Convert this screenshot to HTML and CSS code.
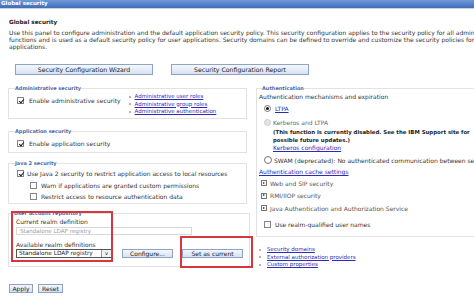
FILE: index.html
```html
<!DOCTYPE html>
<html lang="en">
<head>
  <meta charset="UTF-8">
  <title>Global security</title>
  <link rel="stylesheet" href="styles.css">
</head>
<body>
  <div class="titlebar">Global security</div>
  <div class="page">
    <h1>Global security</h1>
    <p class="desc">Use this panel to configure administration and the default application security policy. This security configuration applies to the security policy for all administrative<br>functions and is used as a default security policy for user applications. Security domains can be defined to override and customize the security policies for user<br>applications.</p>

    <div class="top-actions">
      <button class="btn wide">Security Configuration Wizard</button>
      <button class="btn wide">Security Configuration Report</button>
    </div>

    <div class="columns">
      <div class="left">
        <fieldset class="box admin">
          <legend>Administrative security</legend>
          <div class="admin-row">
            <label class="check"><span class="cb on"></span>Enable administrative security</label>
            <ul class="links">
              <li><a href="#">Administrative user roles</a></li>
              <li><a href="#">Administrative group roles</a></li>
              <li><a href="#">Administrative authentication</a></li>
            </ul>
          </div>
        </fieldset>

        <fieldset class="box app">
          <legend>Application security</legend>
          <label class="check"><span class="cb on"></span>Enable application security</label>
        </fieldset>

        <fieldset class="box java">
          <legend>Java 2 security</legend>
          <label class="check main"><span class="cb on"></span>Use Java 2 security to restrict application access to local resources</label>
          <label class="check sub"><span class="cb"></span>Warn if applications are granted custom permissions</label>
          <label class="check sub"><span class="cb"></span>Restrict access to resource authentication data</label>
        </fieldset>

        <fieldset class="box repo">
          <legend>User account repository</legend>
          <div class="field-label">Current realm definition</div>
          <div class="input disabled">Standalone LDAP registry</div>
          <div class="field-label second">Available realm definitions</div>
          <div class="repo-row">
            <div class="select">Standalone LDAP registry<span class="arrow">v</span></div>
            <button class="btn small">Configure...</button>
            <button class="btn current">Set as current</button>
          </div>
        </fieldset>

        <div class="mark mark-realm"></div>
        <div class="mark mark-current"></div>
      </div>

      <div class="right">
        <fieldset class="box auth">
          <legend>Authentication</legend>
          <div class="plain">Authentication mechanisms and expiration</div>
          <div class="radio-row ltpa"><span class="rb on"></span><a href="#">LTPA</a></div>
          <div class="radio-row off"><span class="rb dis"></span>Kerberos and LTPA</div>
          <div class="note">(This function is currently disabled. See the IBM Support site for<br>possible future updates.)</div>
          <a class="indent-link" href="#">Kerberos configuration</a>
          <div class="radio-row swam"><span class="rb"></span>SWAM (deprecated): No authenticated communication between servers</div>
          <a class="cache-link" href="#">Authentication cache settings</a>
          <div class="expand"><span class="ex"></span>Web and SIP security</div>
          <div class="expand"><span class="ex"></span>RMI/IIOP security</div>
          <div class="expand"><span class="ex"></span>Java Authentication and Authorization Service</div>
          <label class="check realm"><span class="cb"></span>Use realm-qualified user names</label>
        </fieldset>
        <ul class="links extra">
          <li><a href="#">Security domains</a></li>
          <li><a href="#">External authorization providers</a></li>
          <li><a href="#">Custom properties</a></li>
        </ul>
      </div>
    </div>

    <div class="bottom-actions">
      <button class="btn tiny">Apply</button>
      <button class="btn tiny">Reset</button>
    </div>
  </div>
</body>
</html>
```

FILE: styles.css
```css
* {
  margin: 0;
  padding: 0;
  box-sizing: border-box;
}
body {
  font-family: 'DejaVu Sans', Verdana, sans-serif;
  font-size: 6px;
  line-height: 7px;
  color: #333;
  background: #fff;
  overflow: hidden;
  width: 474px;
  height: 306px;
}
a {
  color: #2b2bb8;
  text-decoration: underline;
}
.titlebar {
  height: 9px;
  padding-left: 1px;
  background: linear-gradient(#7099d8, #3f6cb9);
  border-bottom: 1px solid #c3d2ea;
  color: #fff;
  font-weight: bold;
  font-size: 5.5px;
  line-height: 7px;
}
.page {
  width: 640px;
  padding: 0 9px;
}
h1 {
  margin-top: 10px;
  font-size: 5.7px;
  line-height: 7px;
  font-weight: bold;
  color: #222;
}
.desc {
  margin-top: 3px;
  white-space: nowrap;
}
.top-actions {
  display: flex;
  gap: 18px;
  margin-top: 14px;
  padding-left: 6px;
}
.btn {
  font-family: inherit;
  font-size: 6px;
  line-height: 7px;
  color: #222;
  background: linear-gradient(#f5f8fd, #d6e1f1);
  border: 1px solid #8fa3c4;
}
.btn.wide {
  width: 138px;
  height: 11px;
  font-size: 6.2px;
}
.columns {
  display: grid;
  grid-template-columns: 239px 380px;
  column-gap: 9px;
  margin-top: 10px;
  margin-left: -1px;
}
.left {
  display: flex;
  flex-direction: column;
  position: relative;
}
.box {
  border: 1px solid #e2e2e2;
  padding: 0 6px 0 8px;
}
legend {
  font-size: 5px;
  line-height: 6px;
  font-weight: bold;
  color: #4a6aa8;
  padding: 0;
  margin-left: -2px;
}
.check {
  display: flex;
  align-items: center;
  gap: 5px;
  height: 12px;
}
.cb {
  width: 7px;
  height: 7px;
  border: 1px solid #858585;
  background: #fff;
  flex: none;
  position: relative;
}
.cb.on::after {
  content: "";
  position: absolute;
  left: 1.5px;
  top: 0;
  width: 2px;
  height: 4px;
  border: solid #222;
  border-width: 0 1px 1px 0;
  transform: rotate(40deg);
}
.admin {
  height: 34px;
}
.admin-row {
  display: flex;
  gap: 8px;
  margin-top: 2px;
}
.admin-row .check {
  height: 10px;
  margin-top: 2px;
}
.links {
  list-style: none;
  font-size: 5.5px;
  line-height: 7.5px;
}
.links li {
  display: flex;
  align-items: center;
  gap: 4px;
}
.links li::before {
  content: "";
  width: 2px;
  height: 2px;
  background: #b5b5b5;
  flex: none;
}
.app {
  height: 25px;
  margin-top: 9px;
}
.app .check {
  margin-top: 3px;
}
.java {
  height: 44px;
  margin-top: 7px;
}
.java .check {
  height: 11.5px;
}
.java .check.main {
  margin-top: 2px;
  gap: 3px;
}
.java .check.sub {
  margin-left: 13px;
  gap: 4px;
}
.repo {
  height: 57px;
  margin-top: 6px;
  padding-left: 7px;
}
.field-label {
  line-height: 8px;
  margin-top: 2px;
}
.field-label.second {
  margin-top: 6px;
}
.input {
  width: 176px;
  height: 8px;
  margin-top: 1px;
  border: 1px solid #d8d8d8;
  line-height: 6px;
  padding-left: 3px;
  font-size: 5.6px;
}
.input.disabled {
  color: #9a9a9a;
}
.repo-row {
  display: flex;
  align-items: center;
}
.select {
  width: 96px;
  height: 9px;
  border: 1px solid #555;
  line-height: 7px;
  padding-left: 2px;
  position: relative;
  color: #222;
  font-size: 5.8px;
}
.select .arrow {
  position: absolute;
  right: 0;
  top: 0;
  width: 10px;
  height: 7px;
  border-left: 1px solid #999;
  background: #eef1f6;
  text-align: center;
  font-size: 5px;
  line-height: 7px;
}
.btn.small {
  width: 51px;
  height: 9px;
  margin-left: 10px;
}
.btn.current {
  width: 61px;
  height: 9px;
  margin-left: 9px;
}
.mark {
  position: absolute;
  border: 2px solid #d8363d;
  pointer-events: none;
}
.mark-realm {
  left: 3px;
  top: 126px;
  width: 102px;
  height: 51px;
}
.mark-current {
  left: 172px;
  top: 151px;
  width: 73px;
  height: 32px;
}
.auth {
  height: 152px;
  padding: 0 6px 0 2px;
}
.auth legend {
  margin-left: 3px;
}
.plain {
  line-height: 8px;
  margin-top: 2px;
}
.radio-row {
  display: flex;
  align-items: center;
  gap: 2px;
  height: 14px;
  margin-left: 5px;
}
.radio-row.ltpa {
  gap: 4px;
}
.radio-row.off {
  color: #666;
}
.rb {
  width: 7px;
  height: 7px;
  border-radius: 50%;
  border: 1px solid #777;
  background: #fff;
  flex: none;
  position: relative;
}
.rb.on::after {
  content: "";
  position: absolute;
  left: 1px;
  top: 1px;
  width: 3px;
  height: 3px;
  border-radius: 50%;
  background: #111;
}
.rb.dis {
  border-color: #ccc;
  background: #e4e4e4;
}
.note {
  margin-left: 14px;
  margin-top: -1px;
  font-weight: bold;
  font-size: 5.4px;
  line-height: 8px;
  color: #222;
  white-space: nowrap;
}
.indent-link {
  display: block;
  margin-left: 14px;
  line-height: 8px;
}
.radio-row.swam {
  height: 16px;
  white-space: nowrap;
}
.swam .rb {
  width: 8px;
  height: 8px;
}
.cache-link {
  display: block;
  line-height: 7px;
  margin-bottom: 2px;
}
.expand {
  display: flex;
  align-items: center;
  gap: 3px;
  height: 12.5px;
  margin-left: 2px;
  color: #555;
}
.ex {
  width: 6px;
  height: 6px;
  border: 1px solid #777;
  background: #f4f4f4;
  flex: none;
  position: relative;
}
.ex::after {
  content: "";
  position: absolute;
  left: 1px;
  top: 0.5px;
  border-left: 2.5px solid #333;
  border-top: 1.5px solid transparent;
  border-bottom: 1.5px solid transparent;
}
.check.realm {
  margin-left: 5px;
  height: 20px;
  gap: 4px;
}
.links.extra {
  margin-top: 9px;
  margin-left: 3px;
}
.links.extra li {
  gap: 6px;
}
.bottom-actions {
  display: flex;
  gap: 5px;
  margin-top: 15px;
}
.btn.tiny {
  height: 9px;
  padding: 0 2px;
  width: 24px;
}
.btn.tiny + .btn.tiny {
  width: 25px;
}
```
